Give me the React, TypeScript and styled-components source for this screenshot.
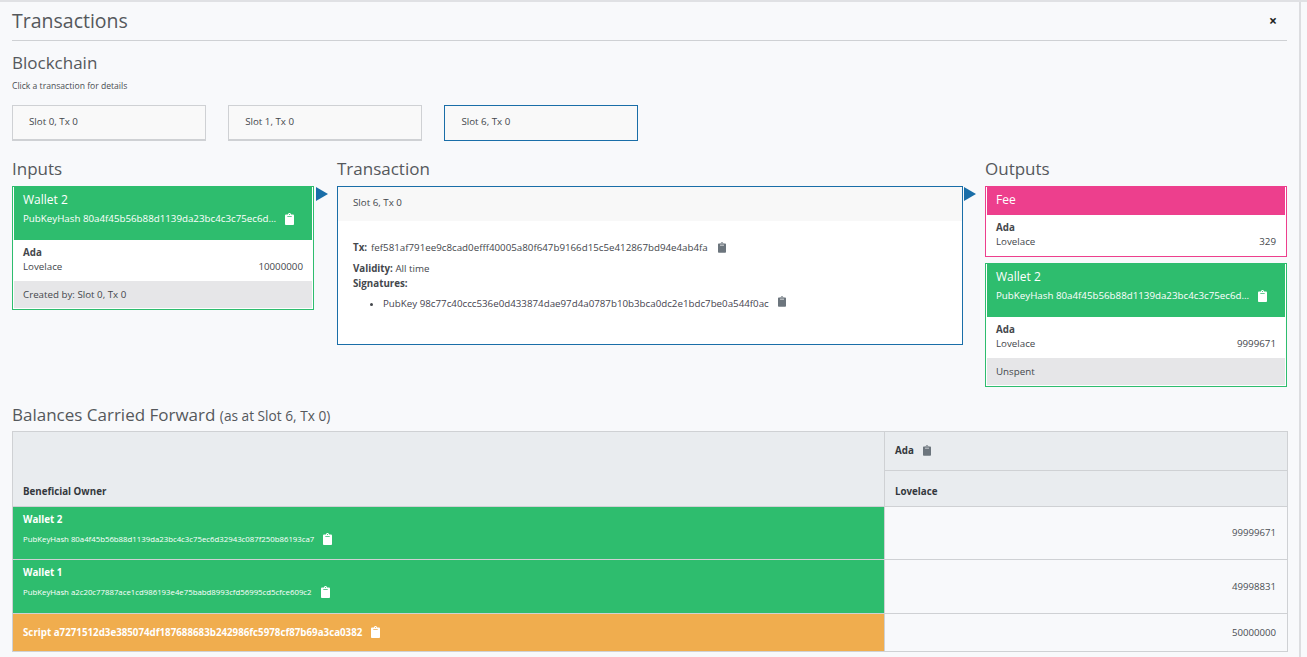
import React from "react";
import styled, { createGlobalStyle } from "styled-components";
import { FaClipboard } from "react-icons/fa";

const GREEN = "#2ebd6e";
const PINK = "#ed3f8d";
const ORANGE = "#f0ad4e";
const BLUE = "#1a6ea8";
const LINE = "#cfd1d4";
const INK = "#44474c";

const Global = createGlobalStyle`
  html, body { margin: 0; padding: 0; background: #f8f9fb; }
  body { font-family: "Open Sans", "Liberation Sans", sans-serif; color: ${INK}; overflow: hidden; }
  * { box-sizing: border-box; }
`;

const Page = styled.div`
  width: 1307px;
  height: 657px;
  border-top: 2px solid #e0e1e4;
  display: flex;
`;
const Main = styled.main`
  width: 1299px;
  padding: 0 12px;
`;
const Rail = styled.div`
  width: 2px;
  background: #dcdde0;
`;
const TitleBar = styled.header`
  height: 39px;
  display: flex;
  align-items: center;
  justify-content: space-between;
  border-bottom: 1px solid ${LINE};
  padding-bottom: 1px;
`;
const Title = styled.h1`
  margin: 0;
  font-size: 19.5px;
  font-weight: 400;
  line-height: 38px;
  color: #55585c;
`;
const Close = styled.span`
  font-size: 14px;
  font-weight: 700;
  color: #222;
  margin-right: 10px;
  line-height: 1;
`;
const SectionTitle = styled.h2`
  margin: 0;
  font-size: 17px;
  font-weight: 400;
  line-height: 23px;
  color: #55585c;
`;
const BlockchainTitle = styled(SectionTitle)`
  margin-top: 10px;
`;
const Caption = styled.p`
  margin: 5px 0 0;
  font-size: 8.6px;
  line-height: 14px;
  color: #4a4d52;
`;
const SlotRow = styled.div`
  display: flex;
  margin-top: 12px;
  gap: 22.6px;
`;
const SlotCard = styled.div<{ $active?: boolean }>`
  width: 193.6px;
  height: 36px;
  background: #f9f9f9;
  border: 1px solid ${(p) => (p.$active ? BLUE : LINE)};
  border-bottom-width: ${(p) => (p.$active ? 1 : 2)}px;
  padding-left: 16px;
  font-size: 9.75px;
  line-height: 31px;
  color: ${INK};
`;
const Flow = styled.section`
  display: grid;
  grid-template-columns: 302px 23px 626px 22px 302px;
  grid-template-rows: 23px auto;
  margin-top: 16px;
  row-gap: 6px;
  align-items: start;
`;
const Arrow = styled.div<{ $left: number }>`
  width: 0;
  height: 0;
  margin: 1px 0 0 ${(p) => p.$left}px;
  border-style: solid;
  border-width: 7px 0 7px 12px;
  border-color: transparent transparent transparent ${BLUE};
`;
const Stack = styled.div`
  display: flex;
  flex-direction: column;
  gap: 6px;
`;
const Card = styled.article<{ $color: string }>`
  border: 1px solid ${(p) => p.$color};
  background: #fff;
  padding: 0 1px;
`;
const CardHead = styled.div<{ $color: string; $tall?: boolean }>`
  background: ${(p) => p.$color};
  color: #fff;
  height: ${(p) => (p.$tall ? 53 : 28)}px;
  padding: 4px 9px 0;
`;
const CardName = styled.div`
  font-size: 12px;
  line-height: 18px;
`;
const HashLine = styled.div`
  display: flex;
  align-items: center;
  font-size: 9.75px;
  line-height: 20px;
`;
const HashText = styled.span`
  width: 250px;
  white-space: nowrap;
`;
const CopyIcon = styled(FaClipboard)<{ $dark?: boolean; $gap?: number }>`
  width: ${(p) => (p.$dark ? 8 : 9)}px;
  height: ${(p) => (p.$dark ? 11 : 12)}px;
  margin-left: ${(p) => p.$gap ?? 9}px;
  color: ${(p) => (p.$dark ? "#6c757d" : "#fff")};
  flex: none;
`;
const CardBody = styled.div`
  padding: 5.6px 9px 6.4px;
  font-size: 9.75px;
  line-height: 14.5px;
`;
const Currency = styled.div`
  font-weight: 700;
`;
const TokenRow = styled.div`
  display: flex;
  justify-content: space-between;
`;
const CardFoot = styled.div`
  background: #e6e6e8;
  height: 27px;
  padding: 0 9px;
  font-size: 9.75px;
  line-height: 27px;
  margin-bottom: 1px;
`;
const TxBox = styled.div`
  height: 159px;
  border: 1px solid ${BLUE};
  background: #fff;
`;
const TxHead = styled.div`
  height: 34px;
  background: #f8f8f8;
  padding-left: 15px;
  font-size: 9.75px;
  line-height: 32px;
`;
const TxBody = styled.div`
  padding: 19px 15px 0;
  font-size: 9.75px;
  line-height: 15px;
`;
const TxLine = styled.div`
  display: flex;
  align-items: center;
  gap: 4px;
  margin-bottom: 6px;
`;
const TxPlain = styled.div`
  line-height: 15px;
`;
const Strong = styled.b`
  font-weight: 700;
`;
const SigList = styled.ul`
  margin: 4px 0 0;
  padding-left: 30px;
`;
const SigItem = styled.li`
  line-height: 17px;
  & > span { color: #46444f; }
`;
const BalanceTitle = styled(SectionTitle)`
  margin-top: 16px;
`;
const Small = styled.small`
  font-size: 13.7px;
`;
const Table = styled.table`
  margin-top: 4px;
  width: 1275px;
  border-collapse: collapse;
  table-layout: fixed;
`;
const Th = styled.th<{ $h: number }>`
  background: #e9ecef;
  border: 1px solid ${LINE};
  text-align: left;
  vertical-align: bottom;
  padding: 0 10px 8px;
  font-size: 9.75px;
  font-weight: 700;
  color: #34383d;
  height: ${(p) => p.$h}px;
`;
const ThMiddle = styled(Th)`
  vertical-align: middle;
  padding-bottom: 0;
`;
const OwnerCell = styled.td<{ $color: string; $h: number; $wallet?: boolean }>`
  background: ${(p) => p.$color};
  color: #fff;
  border: 1px solid ${LINE};
  padding: ${(p) => (p.$wallet ? "6px 10px 0" : "0 10px")};
  vertical-align: ${(p) => (p.$wallet ? "top" : "middle")};
  height: ${(p) => p.$h}px;
`;
const ValueCell = styled.td`
  border: 1px solid ${LINE};
  text-align: right;
  padding: 0 11px;
  font-size: 9.65px;
  color: #4a4d52;
`;
const OwnerName = styled.div`
  font-size: 9.75px;
  font-weight: 700;
  line-height: 14px;
`;
const OwnerHash = styled.div`
  display: flex;
  align-items: center;
  font-size: 7.8px;
  line-height: 14px;
  margin-top: 5px;
`;
const ScriptLine = styled.div`
  display: flex;
  align-items: center;
  font-size: 9.75px;
  font-weight: 700;
`;

function Wallet({ color, name, hash, tokens, foot }: { color: string; name: string; hash?: string; tokens: string; foot?: string }) {
  return (
    <Card $color={color}>
      <CardHead $color={color} $tall={!!hash}>
        <CardName>{name}</CardName>
        {hash && (
          <HashLine>
            <HashText>{hash}</HashText>
            <CopyIcon $gap={12} />
          </HashLine>
        )}
      </CardHead>
      <CardBody>
        <Currency>Ada</Currency>
        <TokenRow>
          <span>Lovelace</span>
          <span>{tokens}</span>
        </TokenRow>
      </CardBody>
      {foot && <CardFoot>{foot}</CardFoot>}
    </Card>
  );
}

const SHORT_HASH = "PubKeyHash 80a4f45b56b88d1139da23bc4c3c75ec6d…";

export default function App() {
  return (
    <>
      <Global />
      <Page>
        <Main>
          <TitleBar>
            <Title>Transactions</Title>
            <Close>×</Close>
          </TitleBar>
          <BlockchainTitle>Blockchain</BlockchainTitle>
          <Caption>Click a transaction for details</Caption>
          <SlotRow>
            <SlotCard>Slot 0, Tx 0</SlotCard>
            <SlotCard>Slot 1, Tx 0</SlotCard>
            <SlotCard $active>Slot 6, Tx 0</SlotCard>
          </SlotRow>
          <Flow>
            <SectionTitle>Inputs</SectionTitle>
            <span />
            <SectionTitle>Transaction</SectionTitle>
            <span />
            <SectionTitle>Outputs</SectionTitle>
            <Wallet color={GREEN} name="Wallet 2" hash={SHORT_HASH} tokens="10000000" foot="Created by: Slot 0, Tx 0" />
            <Arrow $left={2} />
            <TxBox>
              <TxHead>Slot 6, Tx 0</TxHead>
              <TxBody>
                <TxLine>
                  <Strong>Tx:</Strong>
                  <span>fef581af791ee9c8cad0efff40005a80f647b9166d15c5e412867bd94e4ab4fa</span>
                  <CopyIcon $dark $gap={6} />
                </TxLine>
                <TxPlain>
                  <Strong>Validity:</Strong> All time
                </TxPlain>
                <TxPlain>
                  <Strong>Signatures:</Strong>
                </TxPlain>
                <SigList>
                  <SigItem>
                    <span>PubKey 98c77c40ccc536e0d433874dae97d4a0787b10b3bca0dc2e1bdc7be0a544f0ac</span>
                    <CopyIcon $dark />
                  </SigItem>
                </SigList>
              </TxBody>
            </TxBox>
            <Arrow $left={1} />
            <Stack>
              <Wallet color={PINK} name="Fee" tokens="329" />
              <Wallet color={GREEN} name="Wallet 2" hash={SHORT_HASH} tokens="9999671" foot="Unspent" />
            </Stack>
          </Flow>
          <BalanceTitle>
            Balances Carried Forward <Small>(as at Slot 6, Tx 0)</Small>
          </BalanceTitle>
          <Table>
            <colgroup>
              <col width={872} />
              <col width={403} />
            </colgroup>
            <thead>
              <tr>
                <Th $h={39} rowSpan={2}>Beneficial Owner</Th>
                <ThMiddle $h={39}>
                  <ScriptLine>
                    Ada
                    <CopyIcon $dark />
                  </ScriptLine>
                </ThMiddle>
              </tr>
              <tr>
                <Th $h={36}>Lovelace</Th>
              </tr>
            </thead>
            <tbody>
              <tr>
                <OwnerCell $color={GREEN} $h={53} $wallet>
                  <OwnerName>Wallet 2</OwnerName>
                  <OwnerHash>
                    PubKeyHash 80a4f45b56b88d1139da23bc4c3c75ec6d32943c087f250b86193ca7
                    <CopyIcon />
                  </OwnerHash>
                </OwnerCell>
                <ValueCell>99999671</ValueCell>
              </tr>
              <tr>
                <OwnerCell $color={GREEN} $h={54} $wallet>
                  <OwnerName>Wallet 1</OwnerName>
                  <OwnerHash>
                    PubKeyHash a2c20c77887ace1cd986193e4e75babd8993cfd56995cd5cfce609c2
                    <CopyIcon />
                  </OwnerHash>
                </OwnerCell>
                <ValueCell>49998831</ValueCell>
              </tr>
              <tr>
                <OwnerCell $color={ORANGE} $h={38}>
                  <ScriptLine>
                    Script a7271512d3e385074df187688683b242986fc5978cf87b69a3ca0382
                    <CopyIcon />
                  </ScriptLine>
                </OwnerCell>
                <ValueCell>50000000</ValueCell>
              </tr>
            </tbody>
          </Table>
        </Main>
        <Rail />
      </Page>
    </>
  );
}
